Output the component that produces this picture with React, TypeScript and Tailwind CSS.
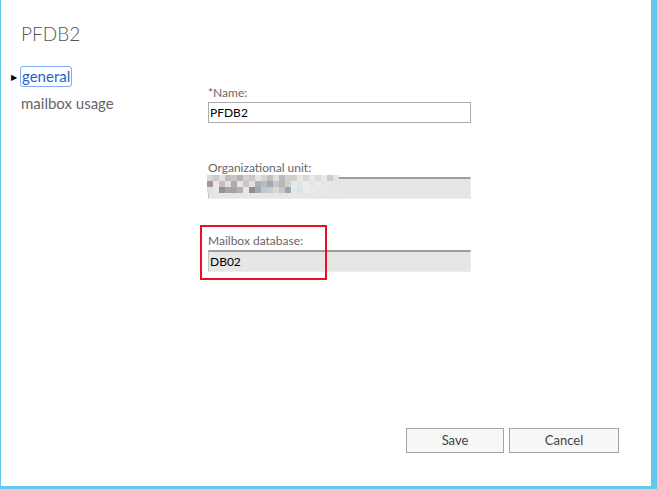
import React from "react";

const mosaicRows: string[][] = [
  ["#d8d8d8", "#cacaca", "#e2e2e2", "#bdbdbd", "#c6c6c6", "#b4b4b4", "#d2d2d2", "#c8c8c8", "#e4e4e4", "#d4d4d4", "#c0c0c0", "#e0e0e0", "#bcbcbc", "#d0d0d0", "#cfcfcf", "#e6e6e6", "#d8d8d8", "#e8e8e8", "#dcdcdc", "#e8e8e8", "#cccccc", "#e4e4e4"],
  ["#a8949c", "#e8e8e8", "#c8c0b4", "#e0e0e0", "#b8a8ac", "#e6e6e6", "#d8c0bc", "#e0e0e0", "#a8b0b8", "#b8bcc4", "#a8a4b0", "#c8c4d0", "#b8b8b8", "#d0d0d0", "#e8e8e8", "#e4e4e4", "#ececec", "#e6e6e6", "#eaeaea", "#e6e6e6", "#e8e8e8", "#e6e6e6"],
  ["#dce0e4", "#e4e8ec", "#9c8c98", "#a0a8a0", "#a8a0b0", "#b8b0b8", "#e8e8e8", "#948c94", "#a8a8ac", "#bcc8d0", "#c8ccd0", "#d8dccc", "#c0c8cc", "#98a8b4", "#e8e8e8", "#d8e4e8", "#ececec", "#e8e8e8", "#e6e6e6", "#e8e8e8", "#e6e6e6", "#e8e8e8"],
];

function Label({ children }: { children: React.ReactNode }) {
  return <div className="mb-[1px] text-[12px] leading-[16px] text-[#666666]">{children}</div>;
}

function ReadOnlyBox({ children }: { children?: React.ReactNode }) {
  return (
    <div className="flex h-[22px] w-[263px] items-center border-t-2 border-l border-r border-b border-t-[#9d9d9d] border-l-[#c4c4c4] border-r-[#ededed] border-b-[#ededed] bg-[#e6e6e6] pl-[1px] text-[12px] text-black">
      {children}
    </div>
  );
}

export default function App() {
  return (
    <div className="flex h-[489px] w-[657px] flex-col border-l border-r-[6px] border-b-[3px] border-[#62c9ea] bg-white font-['Lato',sans-serif]">
      <div className="pl-[20px] pt-[23px] text-[19px] font-light leading-[22px] text-[#555555]">PFDB2</div>

      <div className="flex flex-1">
        <nav className="w-[207px] pt-[21px]">
          <div className="flex items-center">
            <span className="ml-[10px] w-[8px] text-[8px] leading-none text-black">▶</span>
            <span className="ml-[1px] rounded-[3px] border border-[#80aaf2] px-[1px] pb-[1px] text-[15px] leading-[18px] text-[#1a64c2]">
              general
            </span>
          </div>
          <div className="ml-[20px] mt-[7px] text-[15px] leading-[18px] text-[#666666]">mailbox usage</div>
        </nav>

        <div className="pt-[40px]">
          <Label>*Name:</Label>
          <div className="flex h-[21px] w-[263px] items-center border border-[#ababab] bg-white pl-[1px] text-[12px] text-black">
            PFDB2
          </div>

          <div className="mt-[37px]">
            <Label>Organizational unit:</Label>
            <div className="relative">
              <ReadOnlyBox />
              <div className="absolute left-[-1px] top-[-2px] flex flex-col">
                {mosaicRows.map((row, i) => (
                  <div key={i} className="flex">
                    {row.map((c, j) => (
                      <div key={j} className="h-[6px] w-[6px]" style={{ backgroundColor: c }} />
                    ))}
                  </div>
                ))}
              </div>
            </div>
          </div>

          <div className="relative mt-[34px]">
            <div className="absolute left-[-8px] top-[-8px] h-[55px] w-[127px] border-2 border-[#e81123]" />
            <Label>Mailbox database:</Label>
            <ReadOnlyBox>DB02</ReadOnlyBox>
          </div>
        </div>
      </div>

      <div className="flex justify-end gap-[5px] pb-[33px] pr-[32px]">
        <button className="h-[25px] w-[98px] border border-[#9ea7a9] bg-[#f7f7f7] text-[13px] text-[#444444]">Save</button>
        <button className="h-[25px] w-[110px] border border-[#9ea7a9] bg-[#f7f7f7] text-[13px] text-[#444444]">Cancel</button>
      </div>
    </div>
  );
}
